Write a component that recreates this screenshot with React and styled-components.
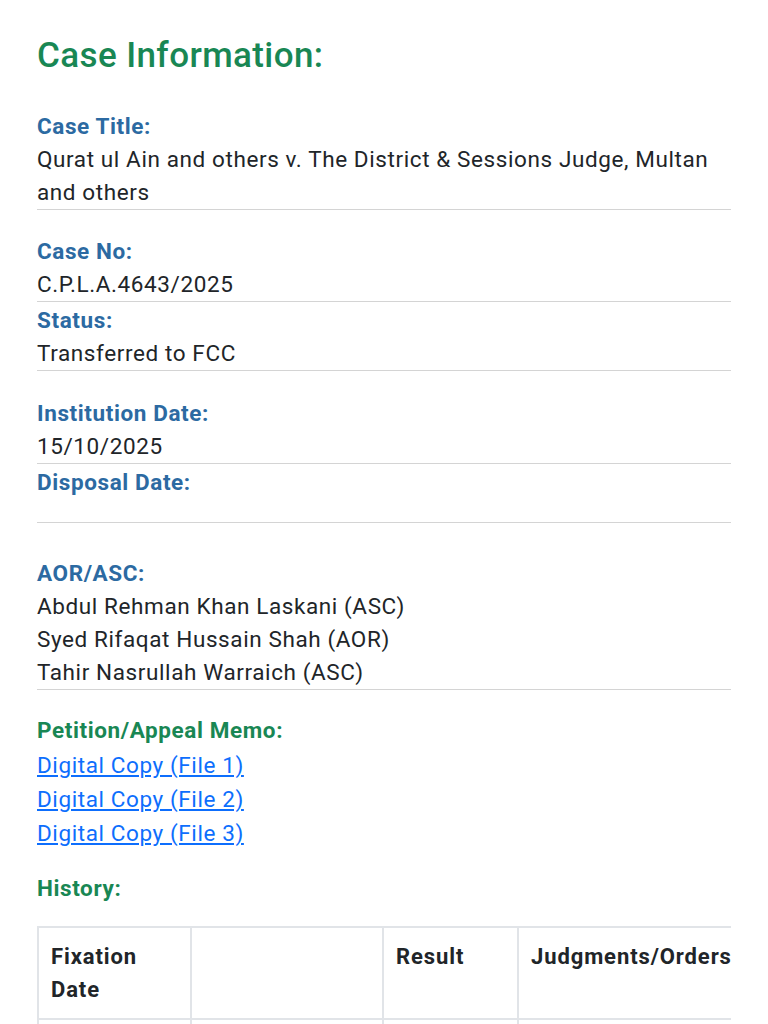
import React from 'react'
import styled, { createGlobalStyle } from 'styled-components'

const GlobalStyle = createGlobalStyle`
  html, body {
    margin: 0;
    padding: 0;
    background: #fff;
  }
  body {
    font-family: Roboto, "Liberation Sans", Arial, sans-serif;
    color: #212529;
  }
`

const Page = styled.div`
  padding: 35px 37px 0;
`

const Title = styled.h2`
  margin: 0 0 31px;
  font-size: 35px;
  line-height: 42px;
  font-weight: 500;
  letter-spacing: 0.4px;
  color: #198754;
`

const Field = styled.div`
  margin-top: ${({ $space }) => $space || 0}px;
  padding-top: 2px;
  border-bottom: ${({ $noRule }) => ($noRule ? 'none' : '1.5px solid #d4d4d4')};
`

const Label = styled.div`
  font-size: 22.5px;
  line-height: 33px;
  font-weight: 700;
  letter-spacing: 0.6px;
  color: ${({ $green }) => ($green ? '#198754' : '#2c6aa2')};
`

const Value = styled.div`
  font-size: 22.5px;
  line-height: 33px;
  font-weight: 400;
  letter-spacing: 0.6px;
  min-height: ${({ $empty }) => ($empty ? '23px' : 'auto')};
`

const LinkList = styled.div`
  padding-top: 1px;
`

const Link = styled.a`
  display: block;
  font-size: 22.5px;
  line-height: 34px;
  letter-spacing: 0.6px;
  color: #0d6efd;
  text-decoration: underline;
  text-underline-offset: 2px;
`

const TableWrap = styled.div`
  margin-top: 21px;
  overflow: hidden;
`

const Table = styled.table`
  width: 800px;
  border-collapse: collapse;
  table-layout: fixed;
`

const Th = styled.th`
  box-sizing: border-box;
  width: ${({ $w }) => $w}px;
  padding: 12px 12px;
  border: 2px solid #e1e4e8;
  text-align: left;
  vertical-align: top;
  font-size: 22px;
  line-height: 33px;
  font-weight: 700;
  letter-spacing: 0.9px;
  color: #212529;
`

const Td = styled.td`
  padding: 12px;
  border: 2px solid #e1e4e8;
  height: 40px;
`

const fields = [
  { label: 'Case Title:', value: ['Qurat ul Ain and others v. The District & Sessions Judge, Multan and others'] },
  { label: 'Case No:', value: ['C.P.L.A.4643/2025'], space: 23 },
  { label: 'Status:', value: ['Transferred to FCC'] },
  { label: 'Institution Date:', value: ['15/10/2025'], space: 24 },
  { label: 'Disposal Date:', value: [] },
  {
    label: 'AOR/ASC:',
    value: [
      'Abdul Rehman Khan Laskani (ASC)',
      'Syed Rifaqat Hussain Shah (AOR)',
      'Tahir Nasrullah Warraich (ASC)',
    ],
    space: 32,
  },
]

const files = ['Digital Copy (File 1)', 'Digital Copy (File 2)', 'Digital Copy (File 3)']

const columns = [
  { title: 'Fixation Date', w: 153 },
  { title: '', w: 192 },
  { title: 'Result', w: 135 },
  { title: 'Judgments/Orders', w: 320 },
]

export default function App() {
  return (
    <>
      <GlobalStyle />
      <Page>
        <Title>Case Information:</Title>

        {fields.map((f) => (
          <Field key={f.label} $space={f.space}>
            <Label>{f.label}</Label>
            {f.value.length ? (
              f.value.map((v) => <Value key={v}>{v}</Value>)
            ) : (
              <Value $empty />
            )}
          </Field>
        ))}

        <Field $space={22} $noRule>
          <Label $green>Petition/Appeal Memo:</Label>
          <LinkList>
            {files.map((name) => (
              <Link key={name} href="#">{name}</Link>
            ))}
          </LinkList>
        </Field>

        <Field $space={20} $noRule>
          <Label $green>History:</Label>
        </Field>

        <TableWrap>
          <Table>
            <thead>
              <tr>
                {columns.map((c, i) => (
                  <Th key={i} $w={c.w}>{c.title}</Th>
                ))}
              </tr>
            </thead>
            <tbody>
              <tr>
                {columns.map((c, i) => (
                  <Td key={i} />
                ))}
              </tr>
            </tbody>
          </Table>
        </TableWrap>
      </Page>
    </>
  )
}
